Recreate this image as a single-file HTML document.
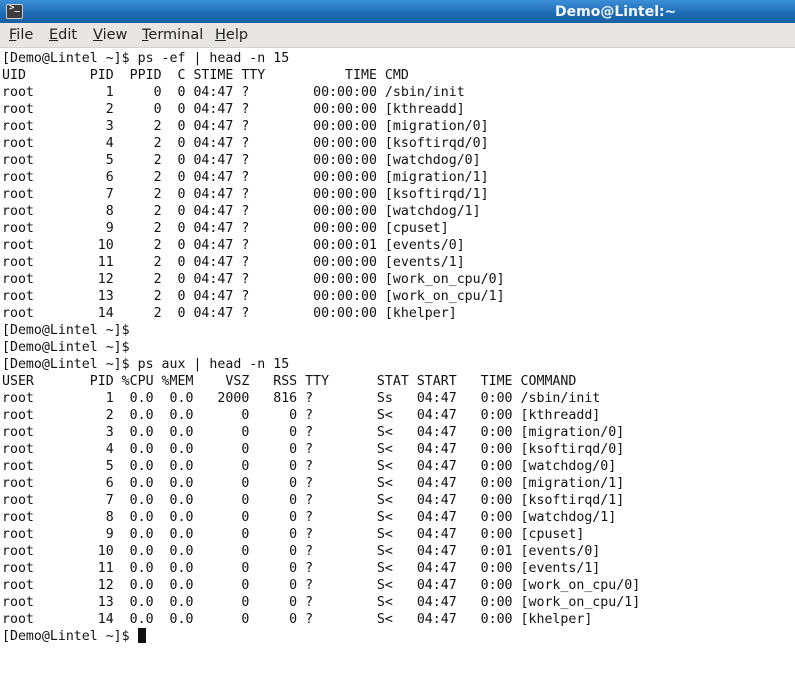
<!DOCTYPE html>
<html><head><style>
html,body{margin:0;padding:0;width:795px;height:675px;overflow:hidden;background:#fff;}
#title{position:absolute;left:0;top:0;width:795px;height:23px;background:linear-gradient(#3a8fd6,#1f6db8 55%,#175f9f);}
#title .t{position:absolute;left:555px;top:4px;color:#f4f8fc;font:bold 14px "DejaVu Sans","Liberation Sans",sans-serif;}
#icon{position:absolute;left:6px;top:4px;width:15px;height:13px;background:#3c3c3c;border:1px solid #ccc;border-radius:2px;}
#icon span{position:absolute;left:2px;top:-2px;color:#fff;font:bold 9px "DejaVu Sans Mono",monospace;}
#menu{position:absolute;left:0;top:23px;width:795px;height:24px;background:#e8e6e3;border-bottom:1px solid #d4d2cf;font:14.5px "DejaVu Sans","Liberation Sans",sans-serif;color:#222;}
#menu span{position:absolute;top:4px;}
pre{position:absolute;left:2px;top:50px;margin:0;font:13.25px/17px "DejaVu Sans Mono","Liberation Mono",monospace;color:#111;}
.cur{background:#111;display:inline-block;width:8px;height:15px;vertical-align:-3px;}
</style></head><body>
<div id="title"><div id="icon"><span>&gt;_</span></div><div class="t">Demo@Lintel:~</div></div>
<div id="menu"><span style="left:9px"><u>F</u>ile</span><span style="left:49px"><u>E</u>dit</span><span style="left:93px"><u>V</u>iew</span><span style="left:142px"><u>T</u>erminal</span><span style="left:215px"><u>H</u>elp</span></div>
<pre>[Demo@Lintel ~]$ ps -ef | head -n 15
UID        PID  PPID  C STIME TTY          TIME CMD
root         1     0  0 04:47 ?        00:00:00 /sbin/init
root         2     0  0 04:47 ?        00:00:00 [kthreadd]
root         3     2  0 04:47 ?        00:00:00 [migration/0]
root         4     2  0 04:47 ?        00:00:00 [ksoftirqd/0]
root         5     2  0 04:47 ?        00:00:00 [watchdog/0]
root         6     2  0 04:47 ?        00:00:00 [migration/1]
root         7     2  0 04:47 ?        00:00:00 [ksoftirqd/1]
root         8     2  0 04:47 ?        00:00:00 [watchdog/1]
root         9     2  0 04:47 ?        00:00:00 [cpuset]
root        10     2  0 04:47 ?        00:00:01 [events/0]
root        11     2  0 04:47 ?        00:00:00 [events/1]
root        12     2  0 04:47 ?        00:00:00 [work_on_cpu/0]
root        13     2  0 04:47 ?        00:00:00 [work_on_cpu/1]
root        14     2  0 04:47 ?        00:00:00 [khelper]
[Demo@Lintel ~]$
[Demo@Lintel ~]$
[Demo@Lintel ~]$ ps aux | head -n 15
USER       PID %CPU %MEM    VSZ   RSS TTY      STAT START   TIME COMMAND
root         1  0.0  0.0   2000   816 ?        Ss   04:47   0:00 /sbin/init
root         2  0.0  0.0      0     0 ?        S&lt;   04:47   0:00 [kthreadd]
root         3  0.0  0.0      0     0 ?        S&lt;   04:47   0:00 [migration/0]
root         4  0.0  0.0      0     0 ?        S&lt;   04:47   0:00 [ksoftirqd/0]
root         5  0.0  0.0      0     0 ?        S&lt;   04:47   0:00 [watchdog/0]
root         6  0.0  0.0      0     0 ?        S&lt;   04:47   0:00 [migration/1]
root         7  0.0  0.0      0     0 ?        S&lt;   04:47   0:00 [ksoftirqd/1]
root         8  0.0  0.0      0     0 ?        S&lt;   04:47   0:00 [watchdog/1]
root         9  0.0  0.0      0     0 ?        S&lt;   04:47   0:00 [cpuset]
root        10  0.0  0.0      0     0 ?        S&lt;   04:47   0:01 [events/0]
root        11  0.0  0.0      0     0 ?        S&lt;   04:47   0:00 [events/1]
root        12  0.0  0.0      0     0 ?        S&lt;   04:47   0:00 [work_on_cpu/0]
root        13  0.0  0.0      0     0 ?        S&lt;   04:47   0:00 [work_on_cpu/1]
root        14  0.0  0.0      0     0 ?        S&lt;   04:47   0:00 [khelper]
[Demo@Lintel ~]$ <span class="cur"></span></pre>
</body></html>
